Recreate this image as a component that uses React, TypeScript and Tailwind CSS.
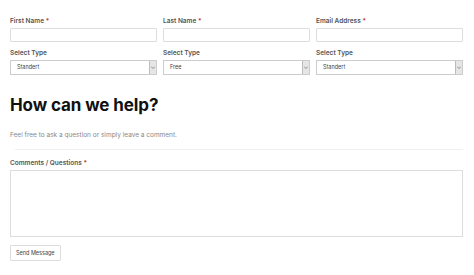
export default function App() {
  const fields = ['First Name', 'Last Name', 'Email Address']
  const selects = ['Standert', 'Free', 'Standert']
  return (
    <div className="w-[474px] h-[275px] bg-white px-[10px] pt-[16px] font-['Inter',sans-serif] text-[#333]">
      <div className="grid grid-cols-3 gap-x-[6px] w-[453px]">
        {fields.map((f) => (
          <div key={f} className="flex flex-col">
            <label className="text-[6.5px] font-semibold text-[#555] leading-[10px] mb-[2px]">
              {f} <span className="text-[#c0392b]">*</span>
            </label>
            <div className="h-[14px] border border-[#ddd] bg-white rounded-[1px]" />
          </div>
        ))}
        {selects.map((s, i) => (
          <div key={i} className="flex flex-col mt-[6px]">
            <label className="text-[6.5px] font-semibold text-[#555] leading-[10px] mb-[2px]">Select Type</label>
            <div className="h-[15px] border border-[#ccc] bg-white flex items-center">
              <span className="flex-1 pl-[6px] text-[5.5px] text-[#444]">{s}</span>
              <div className="w-[7px] h-full bg-[#e6e6e6] border-l border-[#bbb] flex items-center justify-center">
                <svg width="4" height="3" viewBox="0 0 4 3">
                  <path d="M0 0.5 L2 2.5 L4 0.5" stroke="#777" strokeWidth="0.8" fill="none" />
                </svg>
              </div>
            </div>
          </div>
        ))}
      </div>
      <h2 className="mt-[18px] text-[17px] font-bold text-[#111] leading-[24px] tracking-[-0.1px]">How can we help?</h2>
      <p className="mt-[13px] text-[6.5px] text-[#888] leading-[10px]">Feel free to ask a question or simply leave a comment.</p>
      <div className="mt-[9px] ml-[5px] w-[448px] border-t border-[#f0f0f0]" />
      <label className="block mt-[8px] text-[6.5px] font-semibold text-[#555] leading-[10px] mb-[2px]">
        Comments / Questions <span className="text-[#c0392b]">*</span>
      </label>
      <div className="w-[453px] h-[67px] border border-[#ddd] bg-white" />
      <button className="mt-[5px] h-[16px] px-[5px] border border-[#ddd] bg-white text-[5.5px] text-[#444] rounded-[1px]">
        Send Message
      </button>
    </div>
  )
}
